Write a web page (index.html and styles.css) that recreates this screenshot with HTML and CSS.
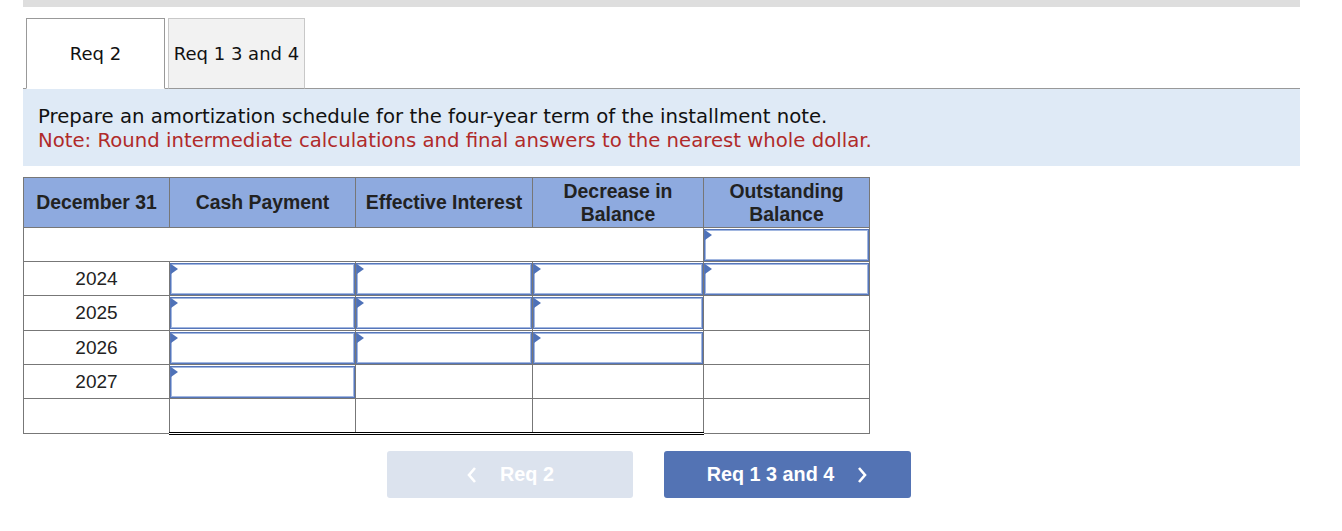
FILE: index.html
```html
<!DOCTYPE html>
<html>
<head>
<meta charset="utf-8">
<link rel="stylesheet" href="styles.css">
</head>
<body>
<div class="page">
  <div class="topbar"></div>
  <div class="tabs">
    <div class="tab active">Req 2</div>
    <div class="tab">Req 1 3 and 4</div>
  </div>
  <div class="prompt">
    <div class="q">Prepare an amortization schedule for the four-year term of the installment note.</div>
    <div class="note">Note: Round intermediate calculations and final answers to the nearest whole dollar.</div>
  </div>
  <table class="sched">
    <colgroup>
      <col class="c1"><col class="c2"><col class="c3"><col class="c4"><col class="c5">
    </colgroup>
    <thead>
      <tr>
        <th>December 31</th>
        <th>Cash Payment</th>
        <th>Effective Interest</th>
        <th>Decrease in<br>Balance</th>
        <th>Outstanding<br>Balance</th>
      </tr>
    </thead>
    <tbody>
      <tr class="r34">
        <td colspan="4"></td>
        <td class="in"><div class="box"></div></td>
      </tr>
      <tr class="r34">
        <td class="yr">2024</td>
        <td class="in"><div class="box"></div></td>
        <td class="in"><div class="box"></div></td>
        <td class="in"><div class="box"></div></td>
        <td class="in"><div class="box"></div></td>
      </tr>
      <tr class="r35">
        <td class="yr">2025</td>
        <td class="in"><div class="box"></div></td>
        <td class="in"><div class="box"></div></td>
        <td class="in"><div class="box"></div></td>
        <td></td>
      </tr>
      <tr class="r34">
        <td class="yr">2026</td>
        <td class="in"><div class="box"></div></td>
        <td class="in"><div class="box"></div></td>
        <td class="in"><div class="box"></div></td>
        <td></td>
      </tr>
      <tr class="r34">
        <td class="yr">2027</td>
        <td class="in"><div class="box"></div></td>
        <td></td>
        <td></td>
        <td></td>
      </tr>
      <tr class="r35 total">
        <td></td>
        <td class="sum"></td>
        <td class="sum"></td>
        <td class="sum"></td>
        <td></td>
      </tr>
    </tbody>
  </table>
  <div class="nav">
    <button class="btn prev"><svg class="chev" width="12" height="18" viewBox="0 0 12 18"><polyline points="9,2 3,9 9,16" fill="none" stroke="#fff" stroke-width="2.6"/></svg><span>Req 2</span></button>
    <button class="btn next"><span>Req 1 3 and 4</span><svg class="chev" width="12" height="18" viewBox="0 0 12 18"><polyline points="3,2 9,9 3,16" fill="none" stroke="#fff" stroke-width="2.6"/></svg></button>
  </div>
</div>
</body>
</html>
```

FILE: styles.css
```css
html, body {
  margin: 0;
  padding: 0;
  background: #fff;
}
.page {
  width: 1277px;
  margin-left: 23px;
}
.topbar {
  height: 7px;
  background: #dedede;
}
.tabs {
  display: flex;
  gap: 3px;
  margin-top: 11px;
  padding-left: 3px;
  border-bottom: 1px solid #999;
  height: 70px;
}
.tab {
  box-sizing: border-box;
  height: 71px;
  margin-bottom: -1px;
  display: flex;
  align-items: center;
  justify-content: center;
  font-family: "DejaVu Sans", Verdana, sans-serif;
  font-size: 18px;
  color: #111;
  border: 1px solid #c8c8c8;
  border-bottom: 1px solid #999;
  background: #f2f2f2;
  width: 137px;
  padding-bottom: 1px;
}
.tab.active {
  width: 139px;
  background: #fff;
  border: 1px solid #999;
  border-bottom: 1px solid #fff;
}
.prompt {
  background: #dfeaf6;
  height: 77px;
  box-sizing: border-box;
  padding: 16px 0 0 15px;
  font-family: "DejaVu Sans", Verdana, sans-serif;
  font-size: 19.7px;
  line-height: 24px;
  color: #111;
}
.note {
  color: #b02a2a;
}
.sched {
  margin-top: 11px;
  border-collapse: collapse;
  table-layout: fixed;
  width: 846px;
  font-family: "Liberation Sans", Arial, sans-serif;
}
col.c1 { width: 146px; }
col.c2 { width: 186px; }
col.c3 { width: 177px; }
col.c4 { width: 171px; }
col.c5 { width: 166px; }
.sched th {
  background: #8eaadf;
  border: 1px solid #777;
  height: 49px;
  padding: 0;
  font-size: 19.4px;
  font-weight: bold;
  line-height: 23px;
  color: #222;
  text-align: center;
}
.sched td {
  border: 1px solid #777;
  padding: 0;
  font-size: 19px;
  color: #222;
  text-align: center;
  vertical-align: middle;
}
tr.r34 { height: 34px; }
tr.r35 { height: 35px; }
.sched td.in {
  position: relative;
}
.box {
  position: relative;
  box-sizing: border-box;
  height: 32px;
  width: 100%;
  background: #fff;
  border: 1px solid #5676ba;
  box-shadow: inset 0 0 0 1px #a2b7e0;
}
.box::before {
  content: "";
  position: absolute;
  left: 0;
  top: 0;
  width: 0;
  height: 0;
  border-top: 5px solid transparent;
  border-bottom: 5px solid transparent;
  border-left: 7px solid #4f72b8;
}
.sched td.sum {
  border-top: 1px solid #000;
  border-bottom: 3px double #000;
}
.nav {
  display: flex;
  gap: 31px;
  margin-top: 16px;
  padding-left: 364px;
}
.btn {
  box-sizing: border-box;
  width: 246px;
  height: 47px;
  border: none;
  border-radius: 3px;
  display: flex;
  align-items: center;
  justify-content: center;
  gap: 22px;
  font-family: "Liberation Sans", Arial, sans-serif;
  font-size: 19.8px;
  font-weight: bold;
  color: #fff;
  padding: 0;
}
.btn.prev {
  background: #dce3ee;
}
.btn.next {
  background: #5373b4;
  width: 247px;
}
.chev {
  display: block;
}
```
